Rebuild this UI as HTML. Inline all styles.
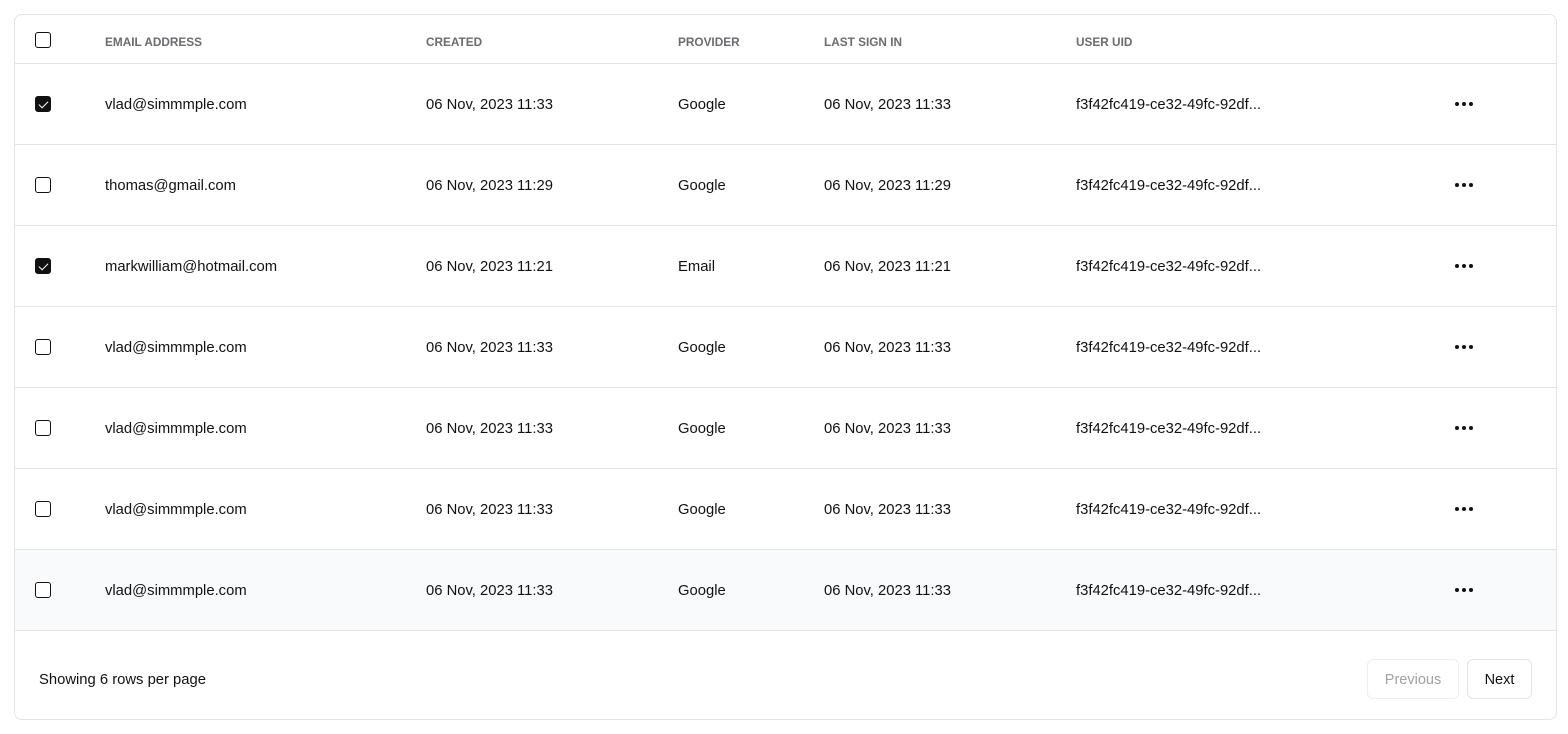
<!DOCTYPE html>
<html><head><style>
*{box-sizing:border-box;margin:0;padding:0}
body{width:1568px;height:734px;background:#fff;font-family:"Liberation Sans",sans-serif;color:#111;position:relative}
.card{position:absolute;left:14px;top:14px;width:1543px;height:706px;border:1px solid #e4e4e7;border-radius:8px;overflow:hidden}
.row{position:absolute;left:0;width:100%;border-bottom:1px solid #e4e4e7}
.c{position:absolute;top:0;height:100%;display:flex;align-items:center;font-size:14.8px;padding-top:2px}
.c.k{padding-top:0}
.h .c{font-size:11.8px;font-weight:bold;color:#6b6b70;padding-top:5px}
.h .c.k{padding-top:1px}
.cb{width:16px;height:16px;border:1.5px solid #111;border-radius:3px;background:#fff;position:relative}
.cb.on{background:#111}
.cb.on:after{content:"";position:absolute;left:4.5px;top:1.5px;width:4px;height:8px;border:solid #fff;border-width:0 1.5px 1.5px 0;transform:rotate(45deg)}
.dots{display:flex;gap:3px}.dots i{width:4px;height:4px;border-radius:50%;background:#111;display:block}
.btn{position:absolute;top:644px;height:40px;border:1px solid #e4e4e7;border-radius:6px;font-size:14.5px;display:flex;align-items:center;justify-content:center;padding-top:1px}
</style></head><body>
<div class="card">
<div class="row h" style="top:0;height:49px">
<div class="c k" style="left:20px"><div class="cb"></div></div>
<div class="c" style="left:90px">EMAIL ADDRESS</div>
<div class="c" style="left:411px">CREATED</div>
<div class="c" style="left:663px">PROVIDER</div>
<div class="c" style="left:809px">LAST SIGN IN</div>
<div class="c" style="left:1061px">USER UID</div>
</div>
<div id="rows"></div>
<div style="position:absolute;left:24px;top:657px;font-size:14.8px">Showing 6 rows per page</div>
<div class="btn" style="left:1352px;width:92px;color:#a1a1a6;border-color:#eee">Previous</div>
<div class="btn" style="left:1452px;width:65px">Next</div>
</div>
<script>
var d=[["vlad@simmmple.com","11:33","Google",1],["thomas@gmail.com","11:29","Google",0],["markwilliam@hotmail.com","11:21","Email",1],["vlad@simmmple.com","11:33","Google",0],["vlad@simmmple.com","11:33","Google",0],["vlad@simmmple.com","11:33","Google",0],["vlad@simmmple.com","11:33","Google",0]];
var h="";d.forEach(function(r,i){var t=49+i*81;h+='<div class="row" style="top:'+t+'px;height:81px;'+(i==6?'background:#f9fafb':'')+'">'+
'<div class="c k" style="left:20px"><div class="cb'+(r[3]?' on':'')+'"></div></div>'+
'<div class="c" style="left:90px">'+r[0]+'</div>'+
'<div class="c" style="left:411px">06 Nov, 2023 '+r[1]+'</div>'+
'<div class="c" style="left:663px">'+r[2]+'</div>'+
'<div class="c" style="left:809px">06 Nov, 2023 '+r[1]+'</div>'+
'<div class="c" style="left:1061px">f3f42fc419-ce32-49fc-92df...</div>'+
'<div class="c k" style="left:1440px"><div class="dots"><i></i><i></i><i></i></div></div></div>';});
document.getElementById("rows").innerHTML=h;
</script>
</body></html>
